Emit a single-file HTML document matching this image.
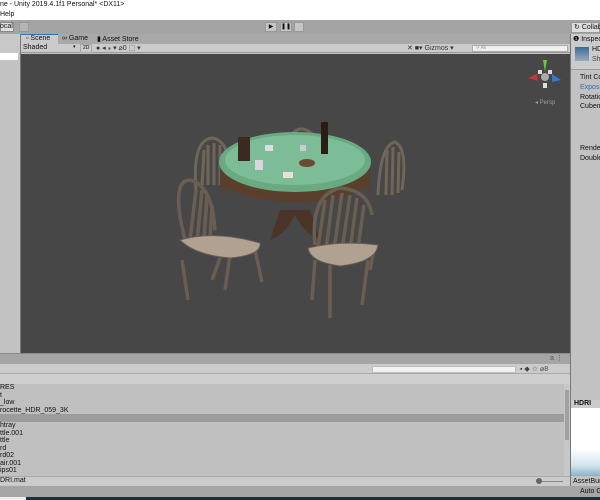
<!DOCTYPE html>
<html><head><style>
*{margin:0;padding:0;box-sizing:border-box}
body{width:600px;height:500px;overflow:hidden;position:relative;font-family:"Liberation Sans",sans-serif;font-size:7px;color:#111;background:#c2c2c2}
div{position:absolute}
.t{white-space:nowrap}
</style></head><body>
<div style="left:0;top:0;width:600px;height:20px;background:#fff"></div>
<div class="t" style="left:0;top:1px;font-size:7px">ne - Unity 2019.4.1f1 Personal* &lt;DX11&gt;</div>
<div class="t" style="left:0;top:11px;font-size:7px">Help</div>
<div style="left:0;top:20px;width:600px;height:14px;background:#a4a4a4"></div>
<div style="left:0;top:22px;width:14px;height:10px;background:#e0e0e0;border:1px solid #888"></div>
<div class="t" style="left:0;top:23px">ocal</div>
<div style="left:19px;top:22px;width:10px;height:10px;background:#b4b4b4;border:1px solid #999"></div>
<div style="left:265px;top:22px;width:12px;height:10px;background:#c6c6c6;border:1px solid #999;font-size:6px;text-align:center">▶</div>
<div style="left:280px;top:22px;width:12px;height:10px;background:#c6c6c6;border:1px solid #999;font-size:6px;text-align:center">❚❚</div>
<div style="left:294px;top:22px;width:10px;height:10px;background:#c6c6c6;border:1px solid #999"></div>
<div style="left:571px;top:22px;width:29px;height:11px;background:#dedede;border:1px solid #999"></div>
<div class="t" style="left:574px;top:23px">↻ Collab</div>
<div style="left:0;top:34px;width:20px;height:19px;background:#c8c8c8"></div>
<div style="left:0;top:53px;width:20px;height:300px;background:#c2c2c2"></div>
<div style="left:0;top:53px;width:18px;height:7px;background:#fff"></div>
<div style="left:20px;top:34px;width:1px;height:320px;background:#777"></div>
<div style="left:21px;top:34px;width:549px;height:10px;background:#a9a9a9"></div>
<div style="left:21px;top:34px;width:37px;height:10px;background:#cbcbcb;border-top:1px solid #3a72b0"></div>
<div class="t" style="left:26px;top:35px">▫ Scene</div>
<div class="t" style="left:62px;top:35px">∞ Game</div>
<div class="t" style="left:97px;top:35px">▮ Asset Store</div>
<div style="left:21px;top:44px;width:549px;height:9px;background:#cbcbcb;border-bottom:1px solid #999"></div>
<div class="t" style="left:23px;top:44px">Shaded</div>
<div class="t" style="left:73px;top:44px;font-size:5px">▾</div>
<div style="left:80px;top:44px;width:12px;height:9px;border:1px solid #aaa;font-size:5px;padding-left:2px">2D</div>
<div class="t" style="left:96px;top:44px;color:#333">● ◂ ⁎ ▾ ⌀0 ⬚ ▾</div>
<div class="t" style="left:407px;top:44px;color:#333">✕ ■▾ Gizmos ▾</div>
<div style="left:472px;top:45px;width:96px;height:7px;background:#f0f0f0;border:1px solid #aaa"></div>
<div class="t" style="left:476px;top:45px;font-size:5px;color:#999">⚲ All</div>
<div style="left:21px;top:54px;width:549px;height:299px;background:#474747"></div>
<svg style="position:absolute;left:21px;top:54px" width="549" height="299">
<g transform="translate(-21,-54)">
<polygon points="543,60 547,60 545,72" fill="#6c3"/>
<polygon points="528,78 537,74 538,81" fill="#c33"/>
<polygon points="561,80 552,74 552,82" fill="#37d"/>
<circle cx="545" cy="77" r="4" fill="#aaa"/>
<rect x="538" y="70" width="4" height="4" fill="#ddd"/><rect x="548" y="70" width="4" height="4" fill="#ddd"/><rect x="543" y="83" width="4" height="5" fill="#ddd"/>
<text x="535" y="104" font-size="6" fill="#999" font-family="Liberation Sans">◂ Persp</text>
<g stroke="#716558" stroke-width="3" fill="none">
<path d="M196,190 Q192,140 212,138 Q230,140 232,180"/>
<path d="M288,140 Q300,118 318,140"/>
<path d="M378,195 Q380,145 395,142 Q408,148 402,190"/>
<path d="M202,185 L204,150 M208,185 L208,145 M214,185 L214,143 M220,185 L220,145 M226,185 L225,150"/>
<path d="M386,195 L387,150 M392,195 L393,147 M398,193 L399,152"/>
</g>
<path d="M280,210 L270,240 Q285,235 295,215 Q305,235 320,240 L310,210Z" fill="#4a3528"/>
<path d="M220,165 L220,187 Q295,217 370,187 L370,165Z" fill="#5a3f2c"/>
<ellipse cx="295" cy="162" rx="76" ry="30" fill="#6aaa82"/>
<ellipse cx="295" cy="160" rx="70" ry="25" fill="#7cbc96"/>
<rect x="238" y="137" width="12" height="24" fill="#3a2a22"/>
<rect x="321" y="122" width="7" height="32" fill="#2c1c16"/>
<ellipse cx="307" cy="163" rx="8" ry="4" fill="#6b4a30"/>
<rect x="255" y="160" width="8" height="10" fill="#d8d4e0"/><rect x="283" y="172" width="10" height="6" fill="#e4e0dc"/>
<rect x="265" y="145" width="8" height="6" fill="#ddd"/><rect x="300" y="145" width="6" height="6" fill="#ccc"/>
<g stroke="#6a5e52" stroke-width="3.5" fill="none">
<path d="M185,240 Q170,180 190,180 Q212,185 215,230"/>
<path d="M190,240 L196,190 M197,242 L202,190 M204,240 L207,195 M210,240 L212,205"/>
<path d="M188,300 L182,260 M225,290 L230,255 M262,282 L255,250 M212,280 L220,258"/>
<path d="M315,245 Q310,195 340,188 Q368,190 372,215"/>
<path d="M318,248 L325,200 M326,250 L333,195 M334,250 L342,193 M342,250 L350,195 M350,250 L357,198 M358,248 L364,205"/>
<path d="M312,300 L315,260 M330,318 L330,265 M362,305 L368,260 M370,270 L375,245"/>
</g>
<path d="M180,240 Q215,230 260,243 Q262,255 230,258 Q195,255 180,240Z" fill="#b1a191" stroke="#6a5e52"/>
<path d="M308,248 Q340,240 378,245 Q376,262 340,266 Q310,262 308,248Z" fill="#b1a191" stroke="#6a5e52"/>
</g>
</svg>
<div style="left:570px;top:34px;width:1px;height:453px;background:#777"></div>
<div style="left:571px;top:34px;width:29px;height:10px;background:#cbcbcb"></div>
<div class="t" style="left:573px;top:35px">❶ Inspec</div>
<div style="left:571px;top:44px;width:29px;height:26px;background:#cbcbcb;border-bottom:1px solid #999"></div>
<div style="left:575px;top:47px;width:14px;height:14px;background:linear-gradient(#3d6a9a,#9ab)"></div>
<div class="t" style="left:592px;top:46px">HD</div>
<div class="t" style="left:592px;top:56px;color:#444">Sh</div>
<div class="t" style="left:580px;top:74px">Tint Co</div>
<div class="t" style="left:580px;top:84px;color:#3568a8">Exposu</div>
<div class="t" style="left:580px;top:94px">Rotatio</div>
<div class="t" style="left:580px;top:103px">Cubem</div>
<div class="t" style="left:580px;top:145px">Render</div>
<div class="t" style="left:580px;top:155px">Double</div>
<div style="left:571px;top:400px;width:29px;height:8px;background:#cbcbcb"></div>
<div class="t" style="left:574px;top:400px;font-weight:bold">HDRI</div>
<div style="left:571px;top:408px;width:29px;height:68px;background:linear-gradient(#fff 0%,#fff 60%,#cfe4ee 85%,#8fb0c6 100%)"></div>
<div class="t" style="left:573px;top:478px">AssetBund</div>
<div style="left:0;top:353px;width:570px;height:11px;background:#a5a5a5;border-top:1px solid #888"></div>
<div class="t" style="left:550px;top:354px;color:#555">a ⋮</div>
<div style="left:0;top:364px;width:570px;height:10px;background:#cbcbcb;border-bottom:1px solid #aaa"></div>
<div style="left:372px;top:366px;width:144px;height:7px;background:#f2f2f2;border:1px solid #bbb"></div>
<div class="t" style="left:520px;top:365px;color:#444">▪ ◆ ☆ ⌀8</div>
<div style="left:0;top:374px;width:570px;height:10px;background:#cfcfcf"></div>
<div style="left:0;top:384px;width:564px;height:92px;background:#c0c0c0"></div>
<div style="left:0;top:414px;width:564px;height:8px;background:#9c9c9c"></div>
<div style="left:564px;top:384px;width:6px;height:92px;background:#c8c8c8"></div>
<div style="left:565px;top:390px;width:4px;height:50px;background:#a0a0a0"></div>
<div class="t" style="left:0;top:384px;line-height:7.5px">RES<br>t<br>_low<br>rocette_HDR_059_3K</div>
<div class="t" style="left:0;top:422px;line-height:7.5px">htray<br>ttle.001<br>ttle<br>rd<br>rd02<br>air.001<br>ips01</div>
<div style="left:0;top:476px;width:570px;height:10px;background:#cbcbcb;border-top:1px solid #aaa"></div>
<div class="t" style="left:0;top:477px">DRI.mat</div>
<div style="left:537px;top:481px;width:26px;height:1px;background:#888"></div>
<div style="left:536px;top:478px;width:6px;height:6px;border-radius:50%;background:#666"></div>
<div style="left:0;top:486px;width:600px;height:11px;background:#a5a5a5"></div>
<div class="t" style="left:580px;top:488px">Auto Ge</div>
<div style="left:0;top:497px;width:600px;height:3px;background:#1e2e38"></div>
<div style="left:0;top:497px;width:26px;height:3px;background:#eee"></div>
</body></html>
